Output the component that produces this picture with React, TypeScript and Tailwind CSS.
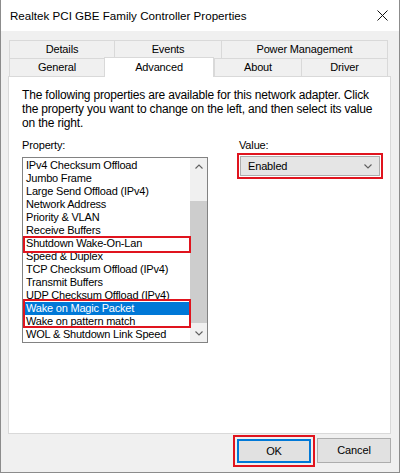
import React from 'react';

const ITEMS = [
  'IPv4 Checksum Offload',
  'Jumbo Frame',
  'Large Send Offload (IPv4)',
  'Network Address',
  'Priority & VLAN',
  'Receive Buffers',
  'Shutdown Wake-On-Lan',
  'Speed & Duplex',
  'TCP Checksum Offload (IPv4)',
  'Transmit Buffers',
  'UDP Checksum Offload (IPv4)',
  'Wake on Magic Packet',
  'Wake on pattern match',
  'WOL & Shutdown Link Speed',
];

const SELECTED = 'Wake on Magic Packet';

function Chevron({ up = false }: { up?: boolean }) {
  return (
    <svg width="8" height="5" viewBox="0 0 8 5">
      <path
        d={up ? 'M0.5 4.5 L4 1 L7.5 4.5' : 'M0.5 0.5 L4 4 L7.5 0.5'}
        fill="none"
        stroke="#606060"
        strokeWidth="1.1"
      />
    </svg>
  );
}

function Tab({ label, w, last = false }: { label: string; w: string; last?: boolean }) {
  return (
    <div
      className={`${w} h-[18px] flex items-center justify-center border-l border-t border-[#d9d9d9] bg-[#f0f0f0] ${
        last ? 'border-r' : ''
      }`}
    >
      {label}
    </div>
  );
}

export default function App() {
  return (
    <div className="w-[400px] h-[473px] flex flex-col border-x border-b border-[#8c8c8c] bg-[#f0f0f0] font-['Liberation_Sans',Arial,sans-serif] text-[11px] tracking-[-0.15px] text-black overflow-hidden">
      {/* title bar */}
      <div className="h-[31px] shrink-0 bg-white flex items-center justify-between pl-[9px] pr-[10px]">
        <span className="text-[11.6px] tracking-[0px]">Realtek PCI GBE Family Controller Properties</span>
        <svg width="11" height="11" viewBox="0 0 11 11" className="mr-[1px]">
          <path d="M0.5 0.5 L10.5 10.5 M10.5 0.5 L0.5 10.5" stroke="#111" strokeWidth="1" />
        </svg>
      </div>

      {/* body */}
      <div className="flex-1 flex flex-col pl-[7px] pt-[9px]">
        {/* tabs */}
        <div className="ml-[1px] flex flex-col leading-none">
          <div className="flex">
            <Tab label="Details" w="w-[105px]" />
            <Tab label="Events" w="w-[107px]" />
            <Tab label="Power Management" w="w-[167px]" last />
          </div>
          <div className="flex">
            <Tab label="General" w="w-[95px]" />
            <div className="relative z-10 w-[110px] h-[20px] -mt-[1px] -mb-[1px] flex items-start justify-center pt-[4px] border-l border-t border-r border-[#d9d9d9] bg-white">
              Advanced
            </div>
            <Tab label="About" w="w-[87px]" />
            <Tab label="Driver" w="w-[87px]" last />
          </div>
        </div>

        {/* panel */}
        <div className="w-[383px] h-[358px] border border-[#d9d9d9] bg-white pl-[13px] pt-[11px]">
          <p className="leading-[14px] text-[12px] tracking-[-0.18px]">
            The following properties are available for this network adapter. Click
            <br />
            the property you want to change on the left, and then select its value
            <br />
            on the right.
          </p>

          <div className="mt-[8px] flex">
            {/* property column */}
            <div className="w-[186px] flex flex-col">
              <div className="leading-[14px]">Property:</div>
              <div className="relative mt-[5px] h-[186px] border border-[#828282] flex">
                <div className="flex-1 pt-[1px] tracking-[-0.2px]">
                  {ITEMS.map(item => (
                    <div
                      key={item}
                      className={`h-[13px] leading-[13px] pl-[3px] whitespace-nowrap ${
                        item === SELECTED ? 'bg-[#0078d7] text-white' : ''
                      }`}
                    >
                      {item}
                    </div>
                  ))}
                </div>
                {/* scrollbar */}
                <div className="w-[17px] flex flex-col bg-[#f0f0f0]">
                  <div className="h-[17px] flex items-center justify-center">
                    <Chevron up />
                  </div>
                  <div className="h-[26px]" />
                  <div className="h-[122px] bg-[#cdcdcd]" />
                  <div className="flex-1" />
                  <div className="h-[17px] flex items-center justify-center">
                    <Chevron />
                  </div>
                </div>
                {/* highlight boxes */}
                <div className="absolute left-[0px] top-[78px] w-[168px] h-[17px] border-2 border-[#e0141e]" />
                <div className="absolute left-[0px] top-[141px] w-[168px] h-[29px] border-2 border-[#e0141e]" />
              </div>
            </div>

            {/* value column */}
            <div className="ml-[29px] w-[146px] flex flex-col">
              <div className="leading-[14px] pl-[2px]">Value:</div>
              <div className="mt-[1px] h-[26px] border-2 border-[#e0141e] p-[1px]">
                <div className="h-full border border-[#adadad] bg-[#e5e5e5] flex items-center justify-between pl-[7px] pr-[7px]">
                  <span>Enabled</span>
                  <Chevron />
                </div>
              </div>
            </div>
          </div>
        </div>

        {/* buttons */}
        <div className="flex pl-[225px] pt-[1px] gap-[2px]">
          <div className="w-[82px] h-[32px] border-2 border-[#e0141e] p-[2px]">
            <div className="h-full border-2 border-[#0078d7] bg-[#e1e1e1] flex items-center justify-center">
              OK
            </div>
          </div>
          <div className="mt-[3px] w-[74px] h-[25px] border border-[#adadad] bg-[#e1e1e1] flex items-center justify-center">
            Cancel
          </div>
        </div>
      </div>
    </div>
  );
}
